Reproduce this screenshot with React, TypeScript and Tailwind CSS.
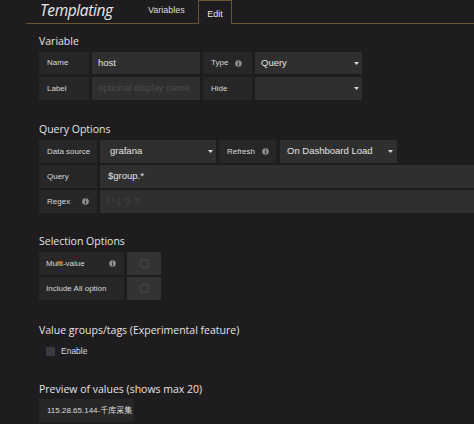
import React from "react";

const SANS = "font-['Liberation_Sans',Arial,sans-serif]";
const HEAD = "font-['Open_Sans',sans-serif]";

function Info() {
  return (
    <svg width="7" height="7" viewBox="0 0 7 7" className="shrink-0">
      <circle cx="3.5" cy="3.5" r="3.3" fill="#8c8c8c" />
      <rect x="3" y="1.3" width="1" height="1" fill="#2a2a2a" />
      <rect x="3" y="2.9" width="1" height="2.8" fill="#2a2a2a" />
    </svg>
  );
}

function Caret() {
  return (
    <svg width="5" height="3" viewBox="0 0 5 3" className="shrink-0">
      <path d="M0 0 L5 0 L2.5 3 Z" fill="#d8d8d8" />
    </svg>
  );
}

function Label({ w, text, info, iconRight }: { w: string; text: string; info?: boolean; iconRight?: string }) {
  return (
    <div className={`${w} h-full bg-[#272727] flex items-center pl-[8px] text-[8px] text-[#d8d9da] ${SANS}`}>
      <span>{text}</span>
      {info && <span className={iconRight}><Info /></span>}
    </div>
  );
}

function Select({ w, text, pl, pr, extra }: { w: string; text: string; pl: string; pr: string; extra?: string }) {
  return (
    <div className={`${w} ${extra ?? ""} h-full bg-[#2f2f2f] flex items-center justify-between ${pl} ${pr} text-[9.5px] text-[#e3e3e3] ${SANS}`}>
      <span>{text}</span>
      <Caret />
    </div>
  );
}

function CheckCell() {
  return (
    <div className="w-[34px] h-full bg-[#333333] flex items-center justify-center">
      <div className="w-[9px] h-[9px] rounded-[2px] border border-[#474747] bg-[#363636]" />
    </div>
  );
}

function Heading({ children, mt }: { children: React.ReactNode; mt: string }) {
  return (
    <div className={`${mt} h-[14px] leading-[14px] text-[10.5px] text-[#e4e4e4] ${HEAD}`}>{children}</div>
  );
}

export default function App() {
  return (
    <div className="w-[474px] h-[424px] bg-[#1e1c1e] overflow-hidden">
      {/* header */}
      <div className="ml-[26px] h-[24px] border-b border-[#6a5630] flex items-end">
        <div className={`ml-[14px] w-[108px] h-[23px] text-[15.5px] italic leading-[20px] text-[#e8e8e8] ${HEAD} tracking-[-0.4px]`}>
          Templating
        </div>
        <div className={`w-[50px] h-[23px] flex items-center text-[9px] text-[#dcdcdc] ${SANS} pb-[1px]`}>Variables</div>
        <div className={`-mb-px w-[34px] h-[24px] border border-b-0 border-[#6a5630] bg-[#1e1c1e] flex items-center justify-center pt-[4px] text-[9px] text-[#e8e8e8] ${SANS}`}>
          Edit
        </div>
      </div>

      <div className="pl-[39px]">
        <Heading mt="mt-[10px]">Variable</Heading>
        <div className="mt-[4px] flex flex-col gap-[3px]">
          <div className="h-[22px] flex gap-[3px]">
            <Label w="w-[50px]" text="Name" />
            <div className={`w-[108px] h-full bg-[#2f2f2f] flex items-center pl-[6px] text-[9.5px] text-[#e3e3e3] ${SANS}`}>host</div>
            <Label w="w-[49px]" text="Type" info iconRight="ml-auto mr-[10px]" />
            <Select w="w-[107px]" text="Query" pl="pl-[6px]" pr="pr-[3px]" />
          </div>
          <div className="h-[23px] flex gap-[3px]">
            <Label w="w-[50px]" text="Label" />
            <div className={`w-[108px] h-full bg-[#2f2f2f] flex items-center pl-[6px] text-[9.5px] text-[#4d4d4d] ${SANS}`}>optional display name</div>
            <Label w="w-[49px]" text="Hide" />
            <Select w="w-[107px]" text="" pl="pl-[6px]" pr="pr-[3px]" />
          </div>
        </div>

        <Heading mt="mt-[22px]">Query Options</Heading>
        <div className="mt-[4px] flex flex-col gap-[2px]">
          <div className="h-[23px] flex gap-[3px]">
            <Label w="w-[58px]" text="Data source" />
            <Select w="w-[116px]" text="grafana" pl="pl-[10px]" pr="pr-[3px]" />
            <Label w="w-[57px]" text="Refresh" info iconRight="ml-auto mr-[7px]" />
            <Select w="w-[117px]" extra="ml-[1px]" text="On Dashboard Load" pl="pl-[7px]" pr="pr-[4px]" />
          </div>
          <div className="h-[23px] flex gap-[3px]">
            <Label w="w-[58px]" text="Query" />
            <div className={`flex-1 h-full bg-[#2f2f2f] flex items-center pl-[8px] text-[9.5px] text-[#e3e3e3] ${SANS}`}>$group.*</div>
          </div>
          <div className="h-[23px] flex gap-[3px]">
            <Label w="w-[58px]" text="Regex" info iconRight="ml-auto mr-[8px]" />
            <div className={`flex-1 h-full bg-[#2f2f2f] flex items-center pl-[7px] text-[8.5px] text-[#474747] ${SANS}`}>/.*-(.*)-.*/</div>
          </div>
        </div>

        <Heading mt="mt-[21px]">Selection Options</Heading>
        <div className="mt-[4px] flex flex-col gap-[2px]">
          <div className="h-[23px] flex gap-[3px]">
            <div className={`w-[85px] h-full bg-[#272727] flex items-center pl-[7px] pr-[8px] text-[8px] text-[#d8d9da] ${SANS}`}>
              <span>Multi-value</span>
              <span className="ml-auto"><Info /></span>
            </div>
            <CheckCell />
          </div>
          <div className="h-[23px] flex gap-[3px]">
            <div className={`w-[85px] h-full bg-[#272727] flex items-center pl-[7px] text-[8px] text-[#d8d9da] ${SANS}`}>
              <span>Include All option</span>
            </div>
            <CheckCell />
          </div>
        </div>

        <Heading mt="mt-[23px]">Value groups/tags (Experimental feature)</Heading>
        <div className="mt-[7px] h-[14px] flex items-center pl-[7px] gap-[6px]">
          <div className="w-[9px] h-[9px] rounded-[1px] bg-[#3a3b42]" />
          <span className={`text-[8.5px] text-[#d8d9da] ${SANS}`}>Enable</span>
        </div>

        <Heading mt="mt-[24px]">Preview of values (shows max 20)</Heading>
        <div className="mt-[3px] w-[95px] h-[23px] bg-[#272727] flex items-center pl-[8px] text-[8px] text-[#d8d9da] font-['Liberation_Sans','Noto_Sans_CJK_SC',sans-serif]">
          115.28.65.144-千库采集
        </div>
      </div>
    </div>
  );
}
